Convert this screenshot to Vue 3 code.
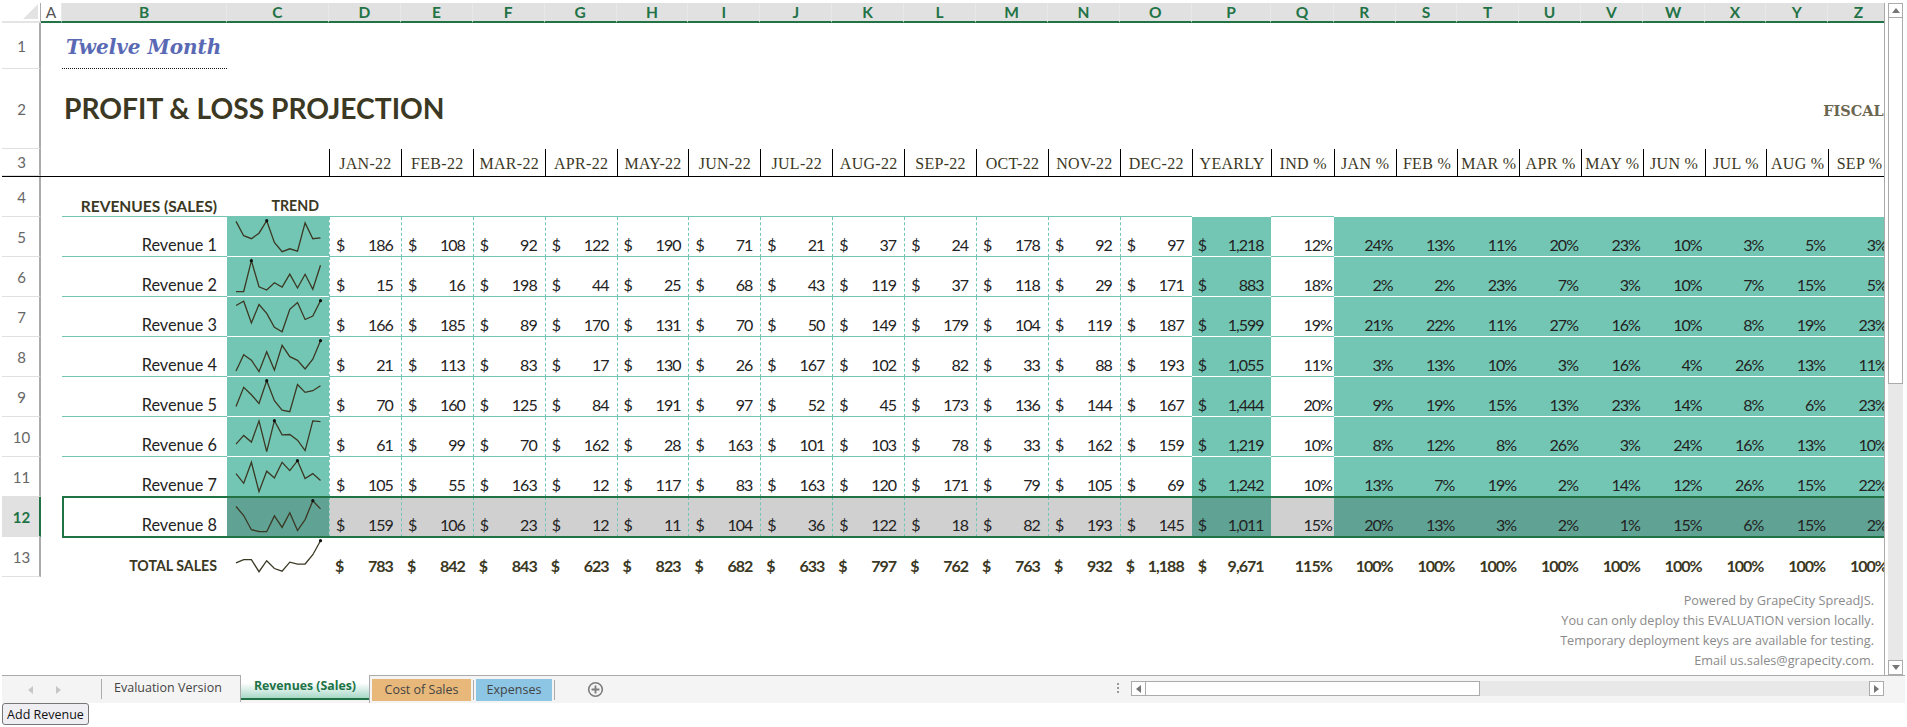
<template>
  <div class="app">
    <div class="workbook">
      <div class="sheet">
        <div class="grid-row col-head">
          <div class="corner"><span class="corner-mark"></span></div>
          <div class="col-letter col-a">A</div>
          <div v-for="letter in letters" :key="letter" class="col-letter">{{ letter }}</div>
        </div>

        <div class="grid-row r1">
          <div class="row-num">1</div>
          <div></div>
          <div class="subtitle"><span>Twelve Month</span></div>
        </div>

        <div class="grid-row r2">
          <div class="row-num">2</div>
          <div></div>
          <div class="title">PROFIT &amp; LOSS PROJECTION</div>
          <div class="fiscal">FISCAL</div>
        </div>

        <div class="grid-row r3">
          <div class="row-num">3</div>
          <div></div>
          <div></div>
          <div></div>
          <div v-for="h in headers" :key="h" class="head-cell">{{ h }}</div>
        </div>

        <div class="grid-row r4">
          <div class="row-num">4</div>
          <div></div>
          <div class="label-cell bold line">REVENUES (SALES)</div>
          <div class="label-cell bold trend line-none">TREND</div>
          <div v-for="n in 12" :key="n" class="line"></div>
          <div></div>
          <div class="line"></div>
          <div v-for="n in 9" :key="'p' + n"></div>
        </div>

        <div
          v-for="(row, i) in rows"
          :key="row.name"
          class="grid-row data"
          :class="{ selected: i === 7 }"
        >
          <div class="row-num">{{ i + 5 }}</div>
          <div></div>
          <div class="label-cell line">{{ row.name }}</div>
          <div class="spark-cell teal">
            <svg width="102" height="39" viewBox="0 0 102 39">
              <polyline :points="sparkPoints(row.values)" class="spark-line" />
              <circle v-bind="sparkMax(row.values)" r="1.6" class="spark-dot" />
            </svg>
          </div>
          <div v-for="(v, j) in row.values" :key="j" class="money line dashed">
            <span>$</span><span>{{ v }}</span>
          </div>
          <div class="money teal yearly"><span>$</span><span>{{ row.yearly }}</span></div>
          <div class="pct ind line">{{ row.ind }}%</div>
          <div v-for="(p, j) in row.pcts" :key="'m' + j" class="pct teal">{{ p }}%</div>
          <div v-if="i === 7" class="selection"></div>
        </div>

        <div class="grid-row data total">
          <div class="row-num">13</div>
          <div></div>
          <div class="label-cell bold total-label">TOTAL SALES</div>
          <div class="spark-cell">
            <svg width="102" height="39" viewBox="0 0 102 39">
              <polyline :points="sparkPoints(totals.values)" class="spark-line" />
              <circle v-bind="sparkMax(totals.values)" r="1.6" class="spark-dot" />
            </svg>
          </div>
          <div v-for="(v, j) in totals.values" :key="j" class="money">
            <span>$</span><span>{{ v === 1188 ? '1,188' : v }}</span>
          </div>
          <div class="money yearly"><span>$</span><span>9,671</span></div>
          <div class="pct ind">115%</div>
          <div v-for="n in 9" :key="'t' + n" class="pct">100%</div>
        </div>

        <div class="watermark">
          <div>Powered by GrapeCity SpreadJS.</div>
          <div>You can only deploy this EVALUATION version locally.</div>
          <div>Temporary deployment keys are available for testing.</div>
          <div>Email us.sales@grapecity.com.</div>
        </div>
      </div>

      <div class="vscroll">
        <div class="sb-btn"><span class="tri tri-up"></span></div>
        <div class="vthumb"></div>
        <div class="sb-btn"><span class="tri tri-down"></span></div>
      </div>
    </div>

    <div class="tabstrip">
      <div class="tab-nav">
        <span class="tri tri-left faint"></span>
        <span class="tri tri-right faint"></span>
      </div>
      <div class="tab plain">Evaluation Version</div>
      <div class="tab active">Revenues (Sales)</div>
      <div class="tab-rest">
        <div class="tab colored orange">Cost of Sales</div>
        <div class="tab colored blue">Expenses</div>
        <svg class="add-sheet" width="17" height="17" viewBox="0 0 17 17">
          <circle cx="8.5" cy="8.5" r="6.8" fill="none" stroke="#7d7d7d" stroke-width="1.6" />
          <path d="M8.5 4.6v7.8M4.6 8.5h7.8" stroke="#7d7d7d" stroke-width="1.8" />
        </svg>
      </div>
      <div class="hscroll-area">
        <div class="dots"></div>
        <div class="hscroll">
          <div class="sb-btn"><span class="tri tri-left"></span></div>
          <div class="hthumb"></div>
          <div class="hspace"></div>
          <div class="sb-btn"><span class="tri tri-right"></span></div>
        </div>
      </div>
    </div>

    <div class="actions">
      <button type="button" class="add-btn">Add Revenue</button>
    </div>
  </div>
</template>

<script setup>
const letters = 'BCDEFGHIJKLMNOPQRSTUVWXYZ'.split('')

const headers = [
  'JAN-22', 'FEB-22', 'MAR-22', 'APR-22', 'MAY-22', 'JUN-22', 'JUL-22', 'AUG-22', 'SEP-22',
  'OCT-22', 'NOV-22', 'DEC-22', 'YEARLY', 'IND %', 'JAN %', 'FEB %', 'MAR %', 'APR %', 'MAY %',
  'JUN %', 'JUL %', 'AUG %', 'SEP %',
]

const rows = [
  { name: 'Revenue 1', values: [186, 108, 92, 122, 190, 71, 21, 37, 24, 178, 92, 97], yearly: '1,218', ind: 12, pcts: [24, 13, 11, 20, 23, 10, 3, 5, 3] },
  { name: 'Revenue 2', values: [15, 16, 198, 44, 25, 68, 43, 119, 37, 118, 29, 171], yearly: '883', ind: 18, pcts: [2, 2, 23, 7, 3, 10, 7, 15, 5] },
  { name: 'Revenue 3', values: [166, 185, 89, 170, 131, 70, 50, 149, 179, 104, 119, 187], yearly: '1,599', ind: 19, pcts: [21, 22, 11, 27, 16, 10, 8, 19, 23] },
  { name: 'Revenue 4', values: [21, 113, 83, 17, 130, 26, 167, 102, 82, 33, 88, 193], yearly: '1,055', ind: 11, pcts: [3, 13, 10, 3, 16, 4, 26, 13, 11] },
  { name: 'Revenue 5', values: [70, 160, 125, 84, 191, 97, 52, 45, 173, 136, 144, 167], yearly: '1,444', ind: 20, pcts: [9, 19, 15, 13, 23, 14, 8, 6, 23] },
  { name: 'Revenue 6', values: [61, 99, 70, 162, 28, 163, 101, 103, 78, 33, 162, 159], yearly: '1,219', ind: 10, pcts: [8, 12, 8, 26, 3, 24, 16, 13, 10] },
  { name: 'Revenue 7', values: [105, 55, 163, 12, 117, 83, 163, 120, 171, 79, 105, 69], yearly: '1,242', ind: 10, pcts: [13, 7, 19, 2, 14, 12, 26, 15, 22] },
  { name: 'Revenue 8', values: [159, 106, 23, 12, 11, 104, 36, 122, 18, 82, 193, 145], yearly: '1,011', ind: 15, pcts: [20, 13, 3, 2, 1, 15, 6, 15, 2] },
]

const totals = { values: [783, 842, 843, 623, 823, 682, 633, 797, 762, 763, 932, 1188] }

const sparkY = (v, values) => {
  const max = Math.max(...values)
  const min = Math.min(...values)
  return 3.7 + ((max - v) / (max - min)) * 31
}

const sparkX = (i) => 9 + (i * 84.5) / 11

const sparkPoints = (values) =>
  values.map((v, i) => `${sparkX(i).toFixed(1)},${sparkY(v, values).toFixed(1)}`).join(' ')

const sparkMax = (values) => {
  const i = values.indexOf(Math.max(...values))
  return { cx: sparkX(i), cy: sparkY(values[i], values) }
}
</script>

<style>
html,
body {
  margin: 0;
  background: #fff;
}
</style>

<style scoped>
.app {
  width: 1907px;
  height: 727px;
  display: flex;
  flex-direction: column;
  overflow: hidden;
  font-family: Lato, "Open Sans", sans-serif;
  color: #000;
}

.workbook {
  display: flex;
  height: 675px;
  padding: 3px 0 0 2px;
  box-sizing: border-box;
}

.sheet {
  position: relative;
  width: 1883px;
  height: 672px;
  overflow: hidden;
  border-right: 1px solid #ababab;
  box-sizing: border-box;
}

.grid-row {
  position: relative;
  display: grid;
  grid-template-columns: 39px 21px 165px 102px repeat(12, 71.9px) 79.8px 62.3px repeat(9, 61.8px);
  width: 1890px;
}

.grid-row > div {
  box-sizing: border-box;
  min-width: 0;
}

/* headers */
.col-head {
  height: 20px;
}

.corner {
  border-right: 1.5px solid #ababab;
  border-bottom: 2px solid #e4e4e4;
  position: relative;
}

.corner-mark {
  position: absolute;
  right: 2px;
  bottom: 2px;
  width: 0;
  height: 0;
  border-left: 15px solid transparent;
  border-bottom: 15px solid #e3e3e3;
}

.col-letter {
  display: flex;
  align-items: center;
  justify-content: center;
  background: #e1e1e1;
  border-bottom: 2px solid #217346;
  border-right: 1px solid #e8e8e8;
  color: #217346;
  font-weight: 700;
  font-size: 15.5px;
  line-height: 18px;
}

.col-a {
  background: #fff;
  color: #555;
  font-weight: 400;
}

.row-num {
  display: flex;
  align-items: center;
  justify-content: center;
  padding-left: 2px;
  border-right: 2px solid #ababab;
  border-bottom: 1px solid #e0e0e0;
  color: #666;
  font-size: 15px;
}

.r1 {
  height: 46px;
}

.r2 {
  height: 80px;
}

.r3 {
  height: 28px;
  border-bottom: 1px solid #000;
  box-sizing: border-box;
}

.r4 {
  height: 40px;
}

.subtitle {
  display: flex;
  align-items: center;
  padding: 2px 0 0 4px;
  border-bottom: 1px dotted #111;
  font-family: "DejaVu Serif", serif;
  font-weight: 700;
  font-style: italic;
  font-size: 20px;
  color: #5a69b4;
  white-space: nowrap;
}

.title {
  grid-column: span 14;
  display: flex;
  align-items: center;
  padding: 0 0 2px 2px;
  font-weight: 700;
  font-size: 28.2px;
  color: #3b3823;
  white-space: nowrap;
}

.fiscal {
  grid-column-start: 27;
  display: flex;
  align-items: center;
  margin-left: -5px;
  padding-top: 2px;
  font-family: "DejaVu Serif", serif;
  font-weight: 700;
  font-size: 14.5px;
  color: #6b664f;
  white-space: nowrap;
}

.head-cell {
  display: flex;
  align-items: center;
  justify-content: center;
  padding-top: 2px;
  border-left: 1.5px solid #000;
  font-family: "Liberation Serif", serif;
  font-size: 16px;
  letter-spacing: 0.3px;
  color: #3b3823;
  white-space: nowrap;
}

.line {
  border-bottom: 1px solid #74c6b4;
}

.label-cell {
  display: flex;
  align-items: flex-end;
  justify-content: flex-end;
  padding: 0 10px 1px 0;
  font-size: 16.3px;
  line-height: 20px;
  color: #222;
  white-space: nowrap;
}

.bold {
  font-weight: 700;
  font-size: 15.5px;
  color: #3b3823;
}

.r4 .label-cell {
  padding-bottom: 0;
}

.total-label {
  font-size: 14.2px;
}

.trend {
  font-size: 14.2px;
  border-bottom: 1px solid #74c6b4;
}

/* data rows */
.data {
  height: 40px;
}

.teal {
  background: #74c6b4;
  border-bottom: 1px solid #fff;
}

.spark-cell {
  display: flex;
  align-items: flex-start;
}

.spark-line {
  fill: none;
  stroke: #3b3823;
  stroke-width: 1.3;
}

.spark-dot {
  fill: #111;
}

.money {
  display: flex;
  align-items: flex-end;
  justify-content: space-between;
  padding: 0 8px 1px 6px;
  font-size: 16px;
  line-height: 20px;
  letter-spacing: -1px;
  color: #222;
}

.dashed {
  border-left: 1px dashed #74c6b4;
}

.pct {
  display: flex;
  align-items: flex-end;
  justify-content: flex-end;
  padding: 0 3px 1px 0;
  font-size: 16px;
  line-height: 20px;
  letter-spacing: -1px;
  color: #222;
  white-space: nowrap;
}

.ind {
  padding-right: 2px;
}

.total .money,
.total .pct {
  font-weight: 700;
  color: #3b3823;
}

.selected .money,
.selected .pct {
  background: #d0d0d0;
}

.selected .teal {
  background: #60a294;
}

.selected .spark-cell {
  background: #60a294;
}

.selected .row-num {
  background: #e1e1e1;
  border-right-color: #217346;
  color: #217346;
  font-weight: 700;
}

.selection {
  position: absolute;
  left: 60px;
  top: -1px;
  right: 0;
  bottom: -1px;
  border: 2px solid #217346;
  pointer-events: none;
}

.watermark {
  position: absolute;
  right: 10px;
  bottom: 5px;
  text-align: right;
  font-family: "Open Sans", sans-serif;
  font-size: 12.7px;
  line-height: 20px;
  color: #8a8a8a;
}

/* scrollbars */
.vscroll {
  display: flex;
  flex-direction: column;
  width: 15px;
  height: 672px;
  margin-left: 3px;
  background: #e8e8e8;
}

.sb-btn {
  display: flex;
  align-items: center;
  justify-content: center;
  width: 15px;
  height: 15px;
  box-sizing: border-box;
  background: #fff;
  border: 1px solid #ababab;
  flex: none;
}

.vthumb {
  height: 366px;
  background: #fff;
  border: 1px solid #ababab;
  border-top: 0;
  box-sizing: border-box;
  margin-bottom: auto;
}

.tri {
  display: block;
  width: 0;
  height: 0;
  border-style: solid;
  border-color: transparent;
}

.tri-up {
  border-width: 0 4px 5px;
  border-bottom-color: #767676;
}

.tri-down {
  border-width: 5px 4px 0;
  border-top-color: #767676;
}

.tri-left {
  border-width: 4px 5px 4px 0;
  border-right-color: #767676;
}

.tri-right {
  border-width: 4px 0 4px 5px;
  border-left-color: #767676;
}

.faint.tri-left {
  border-right-color: #c6c6c6;
}

.faint.tri-right {
  border-left-color: #c6c6c6;
}

/* tab strip */
.tabstrip {
  display: flex;
  align-items: stretch;
  height: 28px;
  margin-left: 2px;
  width: 1903px;
  background: #f4f4f4;
  box-sizing: border-box;
  font-family: "Open Sans", sans-serif;
  font-size: 12.5px;
  color: #444;
}

.tab-nav {
  display: flex;
  align-items: center;
  gap: 23px;
  width: 99px;
  padding-left: 26px;
  box-sizing: border-box;
  border-top: 1px solid #ababab;
}

.tab {
  display: flex;
  align-items: center;
  white-space: nowrap;
}

.plain {
  width: 140px;
  height: 27px;
  padding: 0 0 4px 13px;
  box-sizing: border-box;
  border-top: 1px solid #ababab;
  border-right: 1px solid #ababab;
  position: relative;
}

.plain::before {
  content: '';
  position: absolute;
  left: 0;
  top: 3px;
  height: 20px;
  border-left: 1px solid #ababab;
}

.active {
  justify-content: center;
  width: 128px;
  height: 25px;
  padding-bottom: 2px;
  box-sizing: border-box;
  border-bottom: 2px solid #217346;
  background: linear-gradient(#fff 35%, #a8d8c8);
  color: #217346;
  font-weight: 700;
  font-size: 12.3px;
}

.tab-rest {
  display: flex;
  align-items: flex-start;
  width: 748px;
  padding: 3px 0 0 2px;
  box-sizing: border-box;
  border-top: 1px solid #ababab;
  border-left: 1px solid #ababab;
}

.colored {
  justify-content: center;
  height: 22px;
  padding-bottom: 2px;
  box-sizing: border-box;
}

.orange {
  width: 99px;
  background: #e7b87a;
  margin-right: 5px;
}

.blue {
  width: 76px;
  background: #8dc6e4;
  margin-right: 2px;
  position: relative;
}

.blue::before {
  content: '';
  position: absolute;
  left: -3px;
  top: 1px;
  height: 20px;
  border-left: 1px solid #ababab;
}

.blue::after {
  content: '';
  position: absolute;
  right: -3px;
  top: 1px;
  height: 20px;
  border-left: 1px solid #ababab;
}

.add-sheet {
  margin: 2px 0 0 33px;
}

.hscroll-area {
  display: flex;
  align-items: center;
  flex: 1;
  padding-right: 21px;
  border-top: 1px solid #ababab;
  box-sizing: border-box;
  position: relative;
}

.dots {
  width: 2px;
  height: 11px;
  margin: 0 12px 2px 0;
  background: repeating-linear-gradient(#999 0 2px, transparent 2px 4px);
}

.hscroll {
  display: flex;
  flex: 1;
  height: 15px;
  margin-bottom: 2px;
  background: #e8e8e8;
}

.hthumb {
  width: 334px;
  background: #fff;
  border: 1px solid #ababab;
  border-left: 0;
  box-sizing: border-box;
}

.hspace {
  flex: 1;
}

/* button */
.actions {
  padding: 0 0 0 2px;
}

.add-btn {
  display: block;
  width: 87px;
  height: 22px;
  padding: 0;
  background: #efeff3;
  border: 1px solid #767676;
  border-radius: 3px;
  font-family: "Open Sans", sans-serif;
  font-size: 12.5px;
  color: #111;
}
</style>
